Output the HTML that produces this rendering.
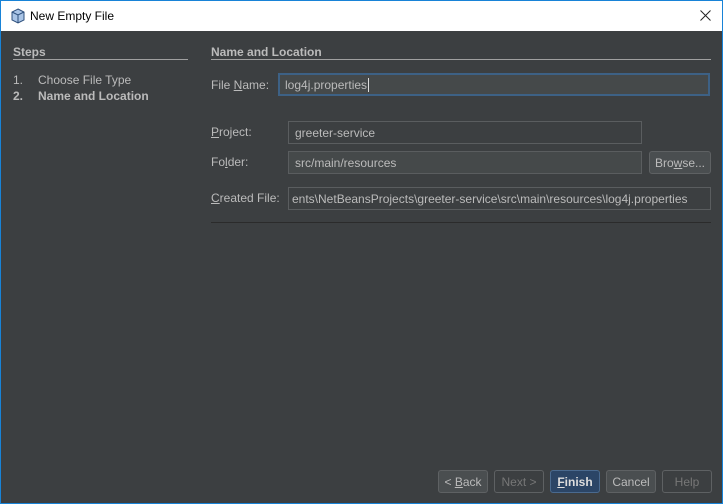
<!DOCTYPE html>
<html><head><style>
*{margin:0;padding:0;box-sizing:border-box}
body{width:723px;height:504px;overflow:hidden;font-family:"Liberation Sans",sans-serif;font-size:12px;color:#bbbbbb;background:#1883d7}
.win{position:absolute;left:1px;top:1px;width:721px;height:502px;background:#3c3f41}
.title{position:absolute;left:0;top:0;width:721px;height:30px;background:#fff;color:#000;font-size:12px}
.a{position:absolute;white-space:nowrap}
.f{position:absolute;border:1px solid #5a5d5f;background:#45494a;padding-left:6px;line-height:22px;color:#bbbbbb;white-space:nowrap;overflow:hidden}
.b{position:absolute;border:1px solid #5e6163;border-radius:3px;background:#4a4e50;text-align:center;line-height:22px;height:23px;width:50px;color:#bbb}
u{text-decoration:underline}
</style></head><body>
<div class="win">
<div class="title">
<svg style="position:absolute;left:9px;top:7px" width="16" height="16" viewBox="0 0 16 16"><path d="M8 1L14 4V12L8 15L2 12V4Z" fill="#a9c4e6" stroke="#2d4f7c"/><path d="M2 4L8 7L14 4M8 7V15" fill="none" stroke="#2d4f7c"/></svg>
<div class="a" style="left:29px;top:8px">New Empty File</div>
<svg style="position:absolute;left:699px;top:9px" width="11" height="11" viewBox="0 0 11 11"><path d="M0.5 0.5L10.5 10.5M10.5 0.5L0.5 10.5" stroke="#222" stroke-width="1"/></svg>
</div>
<div class="a" style="left:12px;top:44px;font-weight:bold">Steps</div>
<div class="a" style="left:12px;top:58px;width:175px;border-top:1px solid #a0a0a0"></div>
<div class="a" style="left:12px;top:72px">1.</div><div class="a" style="left:37px;top:72px">Choose File Type</div>
<div class="a" style="left:12px;top:88px;font-weight:bold">2.</div><div class="a" style="left:37px;top:88px;font-weight:bold">Name and Location</div>
<div class="a" style="left:210px;top:44px;font-weight:bold">Name and Location</div>
<div class="a" style="left:210px;top:58px;width:500px;border-top:1px solid #a0a0a0"></div>
<div class="a" style="left:210px;top:77px">File <u>N</u>ame:</div>
<div class="f" style="left:277px;top:72px;width:432px;height:23px;border:2px solid #3d6185;padding-left:5px;line-height:20px">log4j.properties<span style="border-left:1px solid #ddd;margin-left:1px"></span></div>
<div class="a" style="left:210px;top:124px"><u>P</u>roject:</div>
<div class="f" style="left:287px;top:120px;width:354px;height:23px;background:#3c3f41">greeter-service</div>
<div class="a" style="left:210px;top:154px">Fo<u>l</u>der:</div>
<div class="f" style="left:287px;top:150px;width:354px;height:23px">src/main/resources</div>
<div class="b" style="left:648px;top:150px;width:62px">Bro<u>w</u>se...</div>
<div class="a" style="left:210px;top:190px"><u>C</u>reated File:</div>
<div class="f" style="left:287px;top:186px;width:423px;height:23px;background:#3c3f41;padding-left:3px">ents\NetBeansProjects\greeter-service\src\main\resources\log4j.properties</div>
<div class="a" style="left:210px;top:221px;width:500px;border-top:1px solid #2b2b2b"></div>
<div class="b" style="left:437px;top:469px">&lt; <u>B</u>ack</div>
<div class="b" style="left:493px;top:469px;background:#3c3f41;color:#777">Next &gt;</div>
<div class="b" style="left:549px;top:469px;background:#2b4566;border-color:#4a6a8f;color:#ddd;font-weight:bold"><u>F</u>inish</div>
<div class="b" style="left:605px;top:469px">Cancel</div>
<div class="b" style="left:661px;top:469px;background:#3c3f41;color:#777">Help</div>
</div>
</body></html>
